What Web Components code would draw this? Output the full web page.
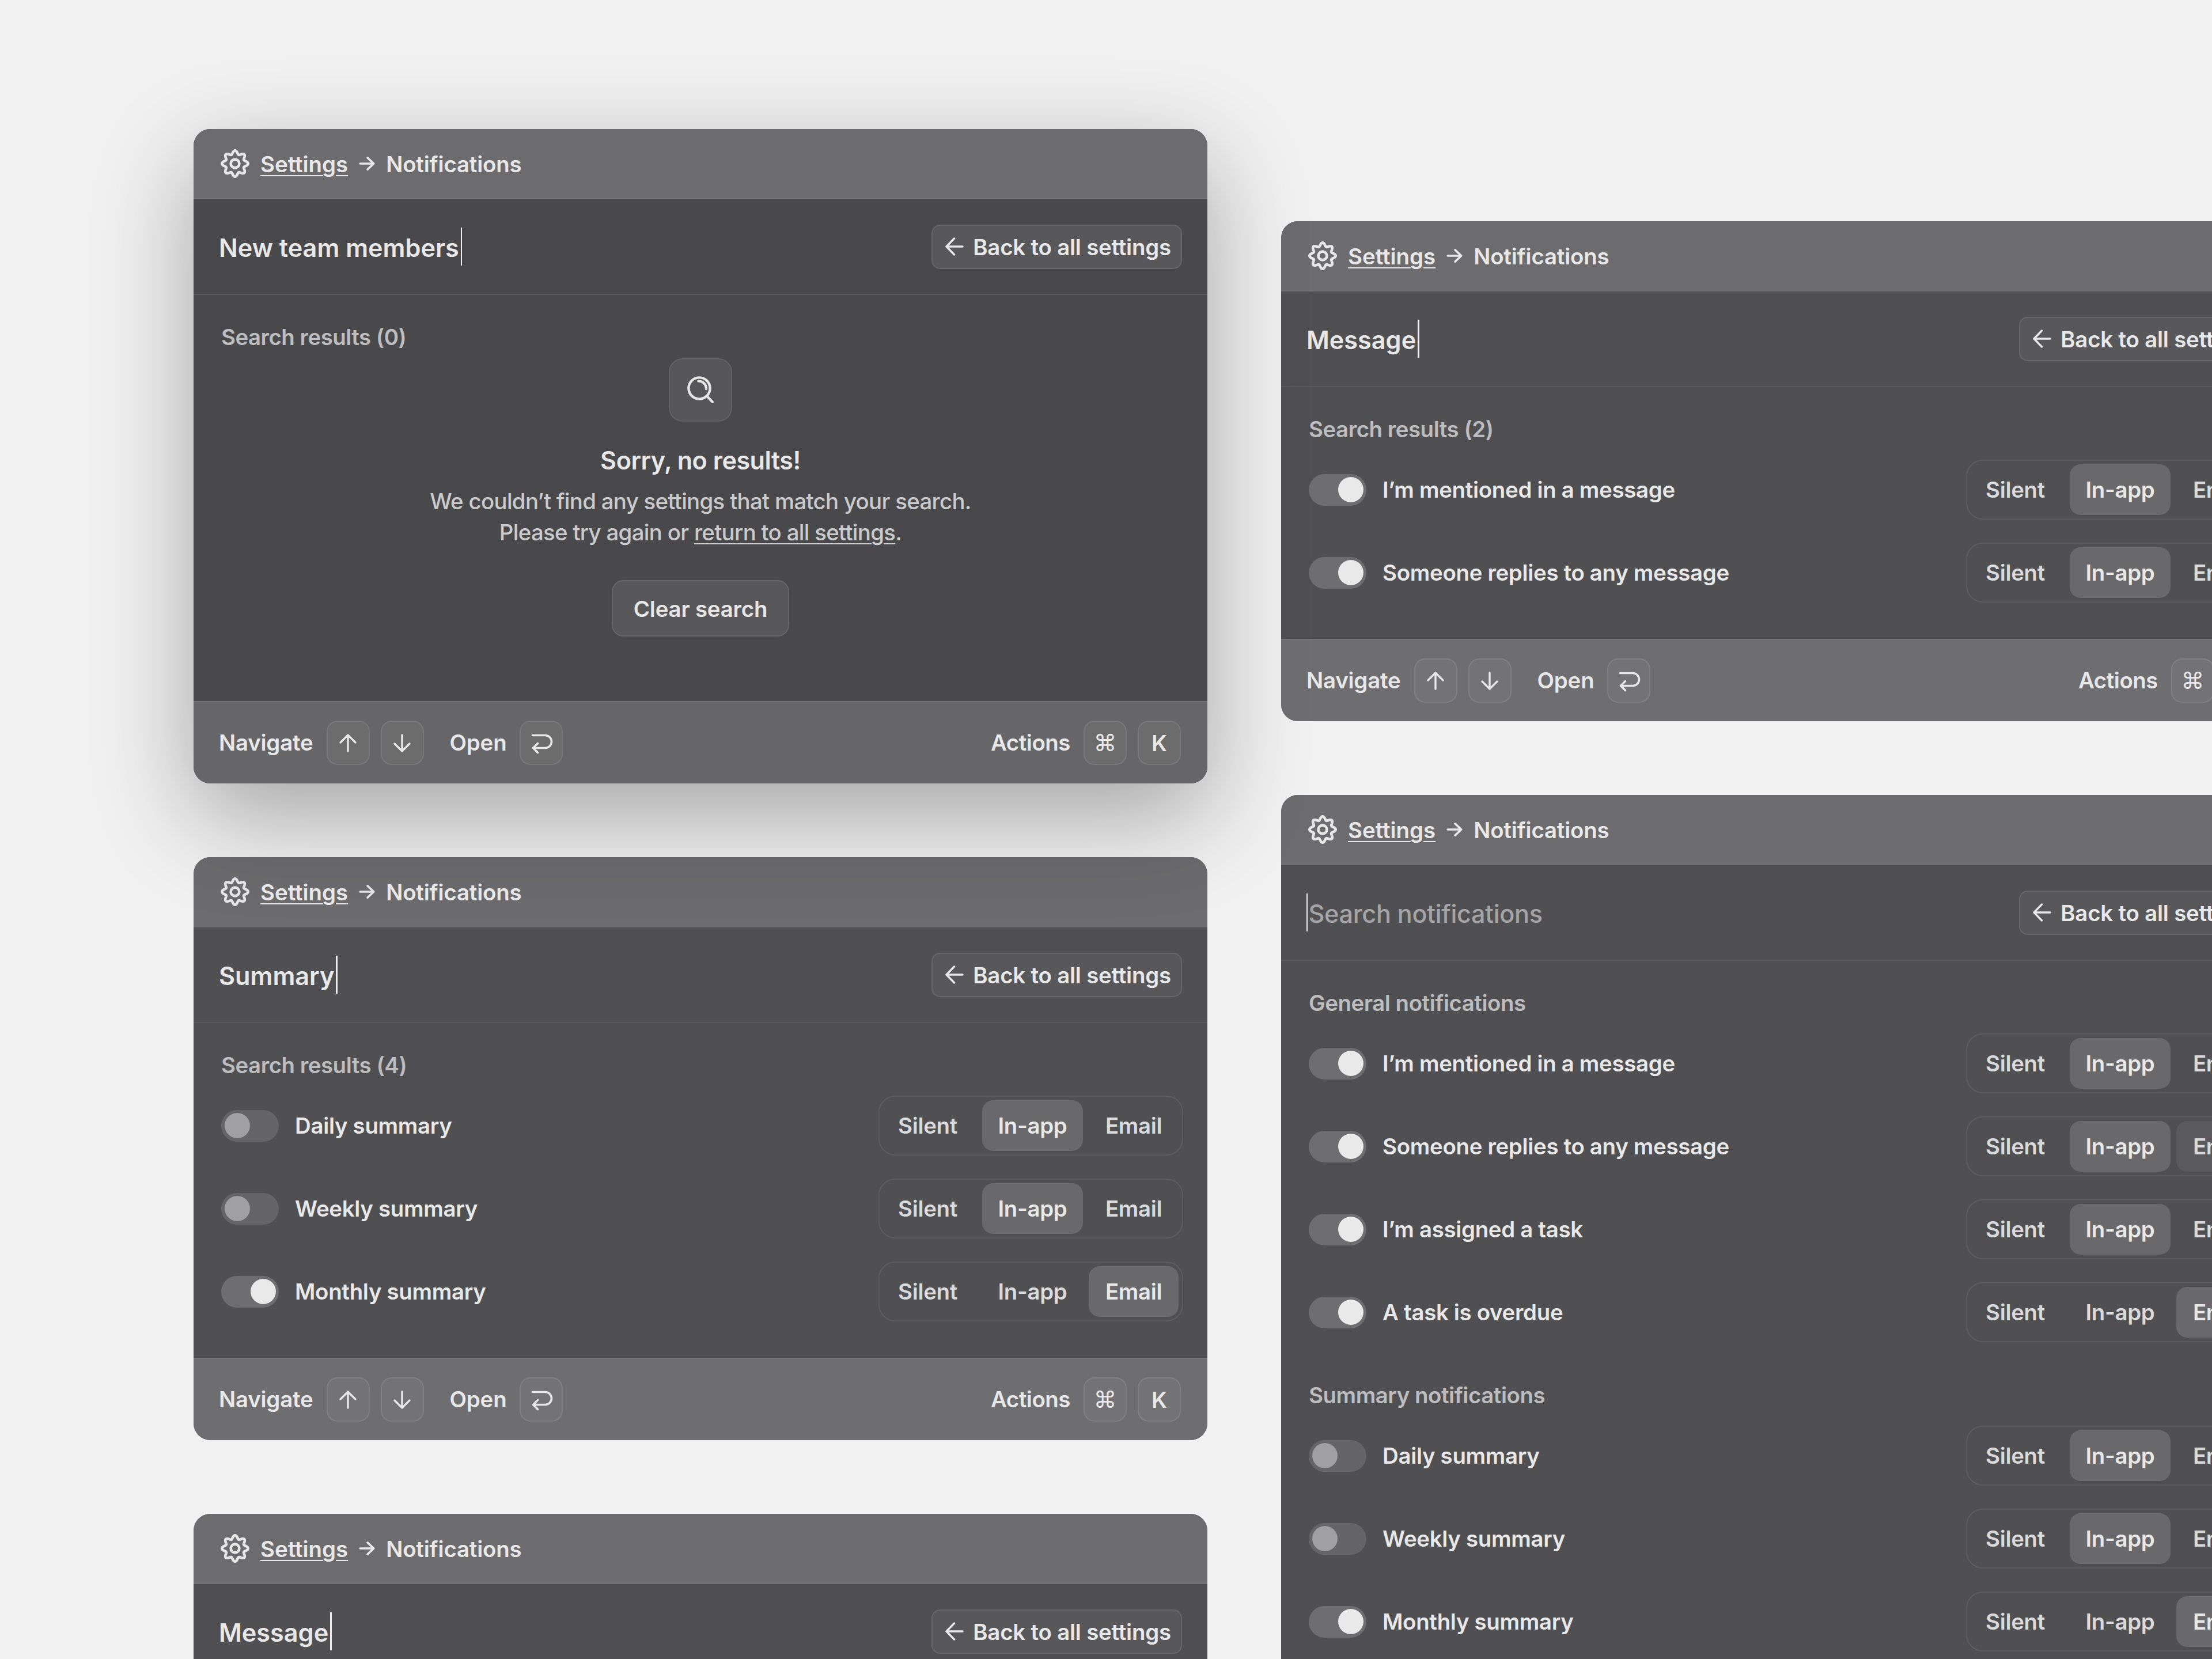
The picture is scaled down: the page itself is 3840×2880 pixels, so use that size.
<!DOCTYPE html>
<html lang="en">
<head>
<meta charset="utf-8">
<title>Settings search</title>
<style>
  html, body { margin: 0; background: #f1f1f1; overflow: hidden; }
  body { font-family: Inter, "Liberation Sans", sans-serif; }
</style>
</head>
<body>

<settings-board>
  <div slot="left">
    <settings-card query="New team members" lifted>
      <empty-state></empty-state>
    </settings-card>
    <settings-card query="Summary">
      <group-label>Search results (4)</group-label>
      <notif-row active="In-app">Daily summary</notif-row>
      <notif-row active="In-app">Weekly summary</notif-row>
      <notif-row on active="Email">Monthly summary</notif-row>
    </settings-card>
    <settings-card query="Message">
      <group-label>Search results (2)</group-label>
      <notif-row on active="In-app">I’m mentioned in a message</notif-row>
      <notif-row on active="In-app">Someone replies to any message</notif-row>
    </settings-card>
  </div>
  <div slot="right">
    <settings-card query="Message">
      <group-label>Search results (2)</group-label>
      <notif-row on active="In-app">I’m mentioned in a message</notif-row>
      <notif-row on active="In-app">Someone replies to any message</notif-row>
    </settings-card>
    <settings-card placeholder="Search notifications">
      <group-label>General notifications</group-label>
      <notif-row on active="In-app">I’m mentioned in a message</notif-row>
      <notif-row on active="In-app" hover="Email">Someone replies to any message</notif-row>
      <notif-row on active="In-app">I’m assigned a task</notif-row>
      <notif-row on active="Email">A task is overdue</notif-row>
      <group-label second>Summary notifications</group-label>
      <notif-row active="In-app">Daily summary</notif-row>
      <notif-row active="In-app">Weekly summary</notif-row>
      <notif-row on active="Email">Monthly summary</notif-row>
    </settings-card>
  </div>
</settings-board>

<script>
//ICONS

//wavy 8 lobe outline for the gear
function gearPath() {
    const pts = [];
    for (let i = 0; i < 160; i++) {
        const a = (i / 160) * Math.PI * 2;
        const r = 19.6 + 3.1 * Math.cos(8 * a);
        const x = 26 + r * Math.sin(a);
        const y = 26 - r * Math.cos(a);
        pts.push(x.toFixed(2) + " " + y.toFixed(2));
    }
    return "M" + pts.join("L") + "Z";
}

const icons = {
    gear: `<svg width="52" height="52" viewBox="0 0 52 52" fill="none" stroke="currentColor" stroke-width="4.6" stroke-linejoin="round"><path d="${gearPath()}"/><circle cx="26" cy="26" r="7.4"/></svg>`,
    right: `<svg width="30" height="30" viewBox="0 0 28 28" fill="none" stroke="currentColor" stroke-width="3.4" stroke-linecap="round" stroke-linejoin="round"><path d="M3 14H25M15 4.5L25 14L15 23.5"/></svg>`,
    left: `<svg width="32" height="32" viewBox="0 0 32 32" fill="none" stroke="currentColor" stroke-width="3.5" stroke-linecap="round" stroke-linejoin="round"><path d="M30 16H3M15.5 2L2 16L15.5 30"/></svg>`,
    up: `<svg width="40" height="40" viewBox="0 0 40 40" fill="none" stroke="currentColor" stroke-width="3.4" stroke-linecap="round" stroke-linejoin="round"><path d="M20 34V6M7 19L20 6L33 19"/></svg>`,
    down: `<svg width="40" height="40" viewBox="0 0 40 40" fill="none" stroke="currentColor" stroke-width="3.4" stroke-linecap="round" stroke-linejoin="round"><path d="M20 6V34M7 21L20 34L33 21"/></svg>`,
    enter: `<svg width="40" height="40" viewBox="0 0 40 40" fill="none" stroke="currentColor" stroke-width="3.6" stroke-linecap="round" stroke-linejoin="round"><path d="M4.5 6.5H26.5A11 11 0 0 1 26.5 28.5H5.5M13.5 20.5L5.5 28.5L13.5 36.5"/></svg>`,
    search: `<svg width="110" height="110" viewBox="0 0 110 110" fill="none" stroke="currentColor" stroke-width="4.4" stroke-linecap="round"><circle cx="53" cy="52" r="18.6"/><path d="M51.5 39.6A13 13 0 0 1 65 53M68 67.5L76 76"/></svg>`
};

//BOARD

class SettingsBoard extends HTMLElement {
    constructor() {
        super();
        this.attachShadow({ mode: "open" });
        this.shadowRoot.innerHTML = `
        <style>
            :host{
                display: flex;
                gap: 128px;
                width: 3840px;
                height: 2880px;
                box-sizing: border-box;
                padding-left: 336px;
                background: #f1f1f1;
                overflow: hidden;
                font-family: Inter, "Liberation Sans", sans-serif;
            }
            ::slotted(div){
                display: flex;
                flex-direction: column;
                flex: 0 0 1760px;
                gap: 128px;
            }
            ::slotted([slot="left"]){ padding-top: 224px; }
            ::slotted([slot="right"]){ padding-top: 384px; }
        </style>
        <slot name="left"></slot>
        <slot name="right"></slot>
        `;
    }
}
customElements.define("settings-board", SettingsBoard);

//KEYCAP

class KeyCap extends HTMLElement {
    constructor() {
        super();
        this.attachShadow({ mode: "open" });
        this.shadowRoot.innerHTML = `
        <style>
            :host{
                display: flex;
                align-items: center;
                justify-content: center;
                box-sizing: border-box;
                width: 75px;
                height: 77px;
                border: 2.4px solid rgba(255,255,255,.09);
                border-radius: 19px;
                background: rgba(255,255,255,.04);
                font-size: 38.4px;
                font-weight: 600;
            }
        </style>
        <slot></slot>
        `;
    }
}
customElements.define("key-cap", KeyCap);

//CARD

class SettingsCard extends HTMLElement {
    constructor() {
        super();
        this.attachShadow({ mode: "open" });
    }

    connectedCallback() {
        const query = this.getAttribute("query");
        const placeholder = this.getAttribute("placeholder");
        const input = query
            ? `<span class="typed">${query}</span><i class="caret"></i>`
            : `<i class="caret first"></i><span class="hint">${placeholder}</span>`;

        this.shadowRoot.innerHTML = `
        <style>
            :host{
                --panel: #505052;
                --bar: #6e6e70;
                display: block;
                flex: none;
                width: 1760px;
                border-radius: 29px;
                overflow: hidden;
                color: #e8e8e8;
                background: var(--panel);
                font-size: 38.4px;
                font-weight: 600;
                letter-spacing: -0.005em;
            }
            :host([lifted]){
                --panel: #49494b;
                --bar: #666668;
                overflow: visible;
                position: relative;
                box-shadow: 0 56px 170px rgba(0,0,0,.32);
            }
            .crumbs{
                display: flex;
                align-items: center;
                box-sizing: border-box;
                height: 122px;
                padding: 0 44px 0 46px;
                background: #6c6c6e;
                border-bottom: 2.4px solid #737375;
                border-radius: 29px 29px 0 0;
            }
            .crumbs svg{ flex: none; }
            .crumbs a, .crumbs .here{ position: relative; top: 1px; }
            .crumbs a{
                margin-left: 18px;
                letter-spacing: 0;
                text-decoration: underline;
                text-decoration-thickness: 2.4px;
                text-underline-offset: 5px;
            }
            .crumbs .arrow{
                display: flex;
                margin: 0 18px;
            }
            .search{
                display: flex;
                align-items: center;
                box-sizing: border-box;
                height: 166px;
                padding: 0 44px;
                border-bottom: 2.4px solid #5a5a5c;
            }
            .typed, .hint{ position: relative; top: 2px; font-size: 43.2px; letter-spacing: 0; }
            .hint{ color: #a5a5a7; font-weight: 500; margin-left: 1px; letter-spacing: -0.007em; }
            .caret{
                width: 2.4px;
                height: 66px;
                margin-left: 3px;
                background: #eeeeee;
            }
            .caret.first{ margin-left: 0; }
            .back{
                display: flex;
                align-items: center;
                gap: 16px;
                box-sizing: border-box;
                height: 77px;
                margin-left: auto;
                padding: 0 17px 0 22px;
                border: 2.4px solid #666668;
                border-radius: 15px;
                background: #58585a;
            }
            .back div{ position: relative; top: 1px; }
            .body{
                display: block;
                padding: 47px 42px 63px 48px;
            }
            .foot{
                display: flex;
                align-items: center;
                box-sizing: border-box;
                height: 143px;
                padding: 0 46px 0 44px;
                background: var(--bar);
                border-top: 2.4px solid #767678;
                border-radius: 0 0 29px 29px;
            }
            .foot span{ margin-right: 23px; position: relative; top: -1px; }
            .foot key-cap + key-cap{ margin-left: 19px; }
            .foot .open{ margin-left: 45px; }
            .foot .actions{ margin-left: auto; letter-spacing: -0.012em; }
        </style>
        <div class="crumbs">
            ${icons.gear}
            <a>Settings</a>
            <div class="arrow">${icons.right}</div>
            <div class="here">Notifications</div>
        </div>
        <div class="search">
            ${input}
            <div class="back">${icons.left}<div>Back to all settings</div></div>
        </div>
        <div class="body"><slot></slot></div>
        <div class="foot">
            <span>Navigate</span>
            <key-cap>${icons.up}</key-cap>
            <key-cap>${icons.down}</key-cap>
            <span class="open">Open</span>
            <key-cap>${icons.enter}</key-cap>
            <span class="actions">Actions</span>
            <key-cap style="font-family:'DejaVu Sans',sans-serif;font-size:40px;font-weight:400">⌘</key-cap>
            <key-cap>K</key-cap>
        </div>
        `;
    }
}
customElements.define("settings-card", SettingsCard);

//SECTION LABEL

class GroupLabel extends HTMLElement {
    constructor() {
        super();
        this.attachShadow({ mode: "open" });
        this.shadowRoot.innerHTML = `
        <style>
            :host{
                display: block;
                height: 52px;
                margin-bottom: 27px;
                line-height: 52px;
                color: #bdbdbf;
                font-size: 38.4px;
                font-weight: 600;
                letter-spacing: -0.012em;
            }
            :host([second]){ margin-top: 66px; }
        </style>
        <slot></slot>
        `;
    }
}
customElements.define("group-label", GroupLabel);

//ROW: toggle, label and the silent / in-app / email control

class NotifRow extends HTMLElement {
    constructor() {
        super();
        this.attachShadow({ mode: "open" });
    }

    connectedCallback() {
        const active = this.getAttribute("active");
        const hover = this.getAttribute("hover");
        const options = ["Silent", "In-app", "Email"].map((name) => {
            let cls = "";
            if (name === active) cls = "on";
            if (name === hover) cls = "hover";
            return `<div class="${cls}">${name}</div>`;
        }).join("");

        this.shadowRoot.innerHTML = `
        <style>
            :host{
                display: flex;
                align-items: center;
                height: 104px;
                margin-bottom: 40px;
                font-size: 38.4px;
                font-weight: 600;
                letter-spacing: -0.008em;
            }
            :host(:last-child){ margin-bottom: 0; }
            .track{
                flex: none;
                box-sizing: border-box;
                width: 100px;
                height: 55px;
                padding: 5.5px;
                margin-right: 28px;
                border-radius: 28px;
                background: #656567;
            }
            .knob{
                width: 44px;
                height: 44px;
                border-radius: 50%;
                background: #a0a0a2;
            }
            :host([on]) .track{ background: #6e6e70; }
            :host([on]) .knob{ margin-left: auto; background: #e9e9e9; }
            .seg{
                display: flex;
                gap: 9.6px;
                box-sizing: border-box;
                height: 104px;
                margin-left: auto;
                padding: 5.6px;
                border: 2.4px solid #5d5d5f;
                border-radius: 29px;
                color: #dadadc;
            }
            .seg div{
                display: flex;
                align-items: center;
                justify-content: center;
                padding: 0 28.8px;
                border-radius: 19px;
                white-space: nowrap;
            }
            .seg div:nth-child(1){ width: 105px; padding: 0 32px 0 25px; }
            .seg div:nth-child(2){ width: 118px; }
            .seg div:nth-child(3){ width: 99px; }
            .seg .on{ background: #69696b; color: #e8e8e8; }
            .seg .hover{ background: #5a5a5c; }
        </style>
        <div class="track"><div class="knob"></div></div>
        <slot></slot>
        <div class="seg">${options}</div>
        `;
    }
}
customElements.define("notif-row", NotifRow);

//NO RESULTS

class EmptyState extends HTMLElement {
    constructor() {
        super();
        this.attachShadow({ mode: "open" });
        this.shadowRoot.innerHTML = `
        <style>
            :host{
                display: flex;
                flex-direction: column;
                align-items: center;
                padding-bottom: 49px;
                font-size: 38.4px;
                font-weight: 600;
            }
            .label{
                align-self: flex-start;
                height: 52px;
                line-height: 52px;
                color: #bdbdbf;
                letter-spacing: -0.013em;
            }
            .icon{
                box-sizing: border-box;
                width: 110px;
                height: 110px;
                margin: 11px 6px 37px 0;
                border: 2.4px solid #626264;
                border-radius: 24px;
                background: #565658;
                color: #e6e6e6;
            }
            .icon svg{ display: block; margin: -2.4px; }
            h3{
                margin: 0 6px 14px 0;
                font-size: 43.2px;
                line-height: 60px;
                font-weight: 600;
                color: #e8e8e8;
                letter-spacing: -0.012em;
            }
            p{
                margin: 0 6px 56px 0;
                text-align: center;
                line-height: 54px;
                font-weight: 500;
                color: #cbcbcd;
                letter-spacing: -0.018em;
            }
            a{
                text-decoration: underline;
                text-decoration-thickness: 2.4px;
                text-underline-offset: 5px;
            }
            .clear{
                display: flex;
                align-items: center;
                box-sizing: border-box;
                height: 98px;
                margin-right: 6px;
                padding: 2px 36px 0;
                border: 2.4px solid #666668;
                border-radius: 20px;
                background: #58585a;
                color: #e6e6e6;
            }
        </style>
        <div class="label">Search results (0)</div>
        <div class="icon">${icons.search}</div>
        <h3>Sorry, no results!</h3>
        <p>We couldn’t find any settings that match your search.<br>Please try again or <a>return to all settings</a>.</p>
        <div class="clear">Clear search</div>
        `;
    }
}
customElements.define("empty-state", EmptyState);
</script>
</body>
</html>
